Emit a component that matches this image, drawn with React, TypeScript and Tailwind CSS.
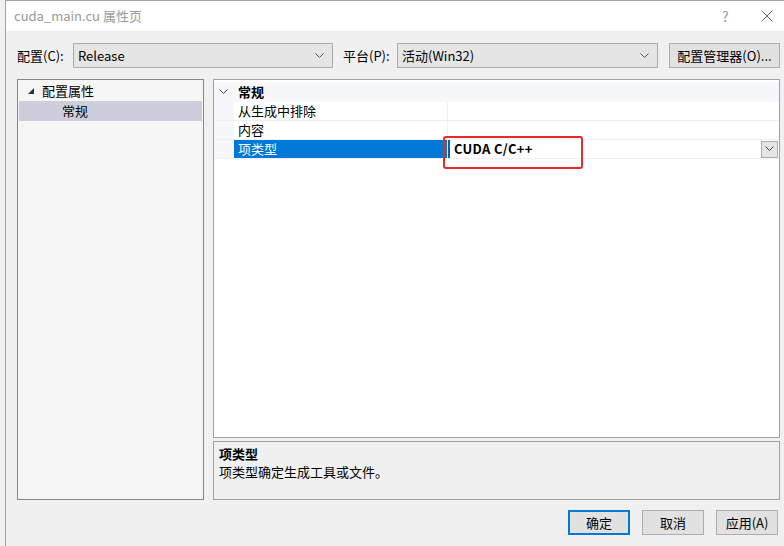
import React from 'react';

const font = { fontFamily: '"Noto Sans CJK SC", "Noto Sans", sans-serif' };

const Chevron: React.FC<{ className?: string }> = ({ className }) => (
    <svg width="9" height="6" viewBox="0 0 9 6" className={className}>
        <path d="M0.5 0.5 L4.5 4.5 L8.5 0.5" fill="none" stroke="currentColor" strokeWidth="1" />
    </svg>
);

const Combo: React.FC<{ value: string; width: string }> = ({ value, width }) => (
    <div className={`${width} h-[25px] flex items-center justify-between bg-[#e5e5e5] border border-[#adadad] pl-[4px] pr-[8px] text-[13px] text-black`}>
        <span>{value}</span>
        <Chevron className="text-[#555]" />
    </div>
);

const PropRow: React.FC<{ name: string; value?: string; selected?: boolean }> = ({ name, value, selected }) => (
    <div className="flex h-[19px] border-b border-[#f0f0f0]">
        <div className="w-[20px] bg-[#f5f7fb] shrink-0" />
        <div
            className={`w-[214px] shrink-0 pl-[4px] flex items-center text-[13px] border-r border-[#f0f0f0] ${selected ? 'bg-[#0078d7] text-white' : 'text-black'}`}
        >
            {name}
        </div>
        <div className="flex-1 flex items-center">
            {selected && (
                <>
                    <div className="w-[2px] h-full bg-[#0063b1]" />
                    <span className="pl-[4px] text-[13px] font-bold text-black tracking-[0.3px]">{value}</span>
                    <div className="ml-auto mr-[1px] w-[17px] h-[17px] bg-[#e5e5e5] border border-[#adadad] flex items-center justify-center text-[#444]">
                        <Chevron />
                    </div>
                </>
            )}
        </div>
    </div>
);

const DialogButton: React.FC<{ label: string; primary?: boolean }> = ({ label, primary }) => (
    <button
        className={`w-[62px] h-[25px] bg-[#e1e1e1] text-[13px] text-black flex items-center justify-center ${primary ? 'border-2 border-[#0078d7]' : 'border border-[#adadad]'}`}
    >
        {label}
    </button>
);

export default function App() {
    return (
        <div className="w-[784px] h-[546px] overflow-hidden bg-[#f0f0f0]" style={font}>
            <div className="ml-[5px] h-full border-l border-t border-[#a0a0a0] flex flex-col w-[800px]">
                {/* Title bar */}
                <div className="h-[30px] bg-white flex items-center shrink-0">
                    <div className="w-[716px] shrink-0 pl-[8px] text-[13px] text-[#999]">cuda_main.cu 属性页</div>
                    <div className="w-[39px] shrink-0 text-[14px] text-[#999]">?</div>
                    <div className="w-[12px] shrink-0 flex">
                        <svg width="12" height="12" viewBox="0 0 12 12" className="text-[#666]">
                            <path d="M0.5 0.5 L11.5 11.5 M11.5 0.5 L0.5 11.5" stroke="currentColor" strokeWidth="1" />
                        </svg>
                    </div>
                </div>

                {/* Dialog body */}
                <div className="flex-1 bg-[#f0f0f0] pl-[11px]">
                    {/* Configuration / platform row */}
                    <div className="flex items-center mt-[12px] h-[25px]">
                        <span className="w-[56px] text-[13px] text-black">配置(C):</span>
                        <Combo value="Release" width="w-[260px]" />
                        <span className="ml-[10px] w-[54px] text-[13px] text-black">平台(P):</span>
                        <Combo value="活动(Win32)" width="w-[261px]" />
                        <button className="ml-[11px] w-[111px] h-[25px] bg-[#e1e1e1] border border-[#adadad] text-[13px] text-black">
                            配置管理器(O)...
                        </button>
                    </div>

                    {/* Tree + property grid */}
                    <div className="flex mt-[11px] h-[421px]">
                        <div className="w-[187px] h-[421px] bg-[#f5f5f5] border border-[#828790] p-[1px]">
                            <div className="h-[20px] flex items-center text-[13px] text-black">
                                <svg width="6" height="6" viewBox="0 0 6 6" className="ml-[9px] mr-[8px]">
                                    <path d="M6 0 L6 6 L0 6 Z" fill="#333" />
                                </svg>
                                配置属性
                            </div>
                            <div className="h-[20px] bg-[#cccedb] flex items-center pl-[43px] text-[13px] text-black">常规</div>
                        </div>

                        <div className="ml-[9px] w-[567px] flex flex-col">
                            <div className="h-[360px] bg-white border border-[#a0a0a0] relative">
                                <div className="flex h-[20px] items-center bg-[#f5f7fb] mt-[2px]">
                                    <Chevron className="ml-[5px] mr-[10px] text-[#444]" />
                                    <span className="text-[13px] font-bold text-black">常规</span>
                                </div>
                                <PropRow name="从生成中排除" />
                                <PropRow name="内容" />
                                <PropRow name="项类型" value="CUDA C/C++" selected />

                                {/* highlight box around the item type value */}
                                <div className="absolute left-[229px] top-[56px] w-[140px] h-[33px] border-2 border-[#e8282b] rounded-[3px]" />
                            </div>

                            <div className="mt-[3px] h-[59px] bg-[#f0f0f0] border border-[#a0a0a0] px-[5px] pt-[3px] text-[13px] text-black leading-[18px]">
                                <div className="font-bold">项类型</div>
                                <div>项类型确定生成工具或文件。</div>
                            </div>
                        </div>
                    </div>

                    {/* Bottom buttons */}
                    <div className="flex mt-[10px] ml-[551px] gap-[12px]">
                        <DialogButton label="确定" primary />
                        <DialogButton label="取消" />
                        <DialogButton label="应用(A)" />
                    </div>
                </div>
            </div>
        </div>
    );
}
